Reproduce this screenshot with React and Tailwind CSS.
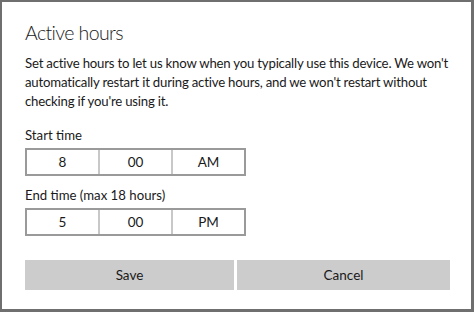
import React from 'react'

const font = { fontFamily: 'Lato, "Open Sans", sans-serif' }

function TimeBox ({ values }) {
  return (
    <div className="flex w-[221px] h-[28px] border-2 border-[#9a9a9a] bg-white">
      {values.map((v, i) => (
        <div
          key={i}
          className={'flex-1 flex items-center justify-center text-[13.5px] text-[#1a1a1a] ' + (i > 0 ? 'border-l-2 border-[#c8c8c8]' : '')}
        >
          {v}
        </div>
      ))}
    </div>
  )
}

export default function App () {
  return (
    <div className="w-[474px] h-[312px] bg-[#6f6f6f] pt-[2px] pl-[2px] pr-[3px] pb-[3px]" style={font}>
      <div className="w-full h-full bg-white pl-[23px] pr-[16px] pt-[18px] text-[#1a1a1a]">
        <h1 className="text-[19.5px] font-light leading-[26px] tracking-[-0.6px]">Active hours</h1>
        <p className="mt-[8px] text-[13.2px] leading-[19px] tracking-[-0.2px] whitespace-nowrap">
          Set active hours to let us know when you typically use this device. We won't<br />
          automatically restart it during active hours, and we won't restart without<br />
          checking if you're using it.
        </p>

        <div className="mt-[15px] text-[13.2px] leading-[19px]">Start time</div>
        <div className="mt-[3px]">
          <TimeBox values={['8', '00', 'AM']} />
        </div>

        <div className="mt-[10px] text-[13.2px] leading-[19px]">End time (max 18 hours)</div>
        <div className="mt-[3px]">
          <TimeBox values={['5', '00', 'PM']} />
        </div>

        <div className="mt-[24px] flex gap-[3px]">
          <button className="w-[209px] h-[30px] bg-[#cccccc] text-[13.5px]">Save</button>
          <button className="w-[213px] h-[30px] bg-[#cccccc] text-[13.5px]">Cancel</button>
        </div>
      </div>
    </div>
  )
}
